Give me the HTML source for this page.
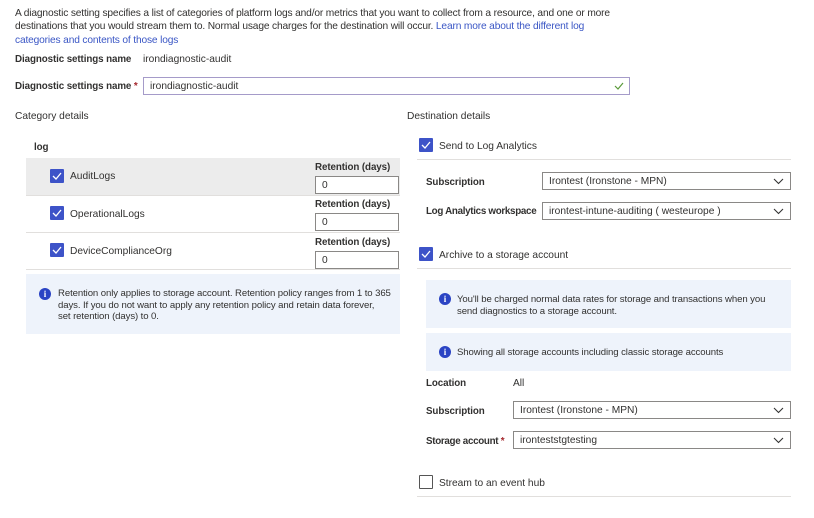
<!DOCTYPE html>
<html><head><meta charset="utf-8"><style>
*{margin:0;padding:0;box-sizing:border-box}
body{width:814px;height:518px;background:#fff;font-family:"Liberation Sans",sans-serif;font-size:10.2px;color:#323130;position:relative;overflow:hidden}
.a{position:absolute;white-space:nowrap;margin-top:1px}
.b{font-weight:bold;font-size:9.8px;letter-spacing:-0.1px}
.cb{position:absolute;width:14px;height:14px;background:#3d53c8;border-radius:1px}
.cb svg{position:absolute;left:2px;top:3px}
.cbu{position:absolute;width:14px;height:14px;border:1px solid #555;border-radius:1px;background:#fff}
.inp{position:absolute;border:1px solid #8a8886;background:#fff;height:18px;padding-left:6px;line-height:18px;font-size:10.2px}
.dd svg{position:absolute;right:6px;top:5px}
.ln{position:absolute;height:1px;background:#e1dfdd}
.info{position:absolute;background:#eef3fb}
.ic{position:absolute;width:12px;height:12px;border-radius:50%;background:#2b44c4;color:#fff;font-size:9px;font-weight:bold;text-align:center;line-height:12px;font-family:"Liberation Serif",serif}
.sm{font-size:9.6px;letter-spacing:-0.1px}
</style></head><body>
<div class="a" style="left:15px;top:6px;line-height:13.3px;font-size:10.2px;letter-spacing:-0.15px">A diagnostic setting specifies a list of categories of platform logs and/or metrics that you want to collect from a resource, and one or more<br>destinations that you would stream them to. Normal usage charges for the destination will occur. <span style="color:#3a56c5">Learn more about the different log</span><br><span style="color:#3a56c5">categories and contents of those logs</span></div>

<div class="a b" style="left:15px;top:53px">Diagnostic settings name</div>
<div class="a" style="left:143px;top:53px">irondiagnostic-audit</div>
<div class="a b" style="left:15px;top:80px">Diagnostic settings name <span style="color:#a4262c">*</span></div>
<div class="inp" style="left:143px;top:77px;width:487px;border-color:#a59bc9">irondiagnostic-audit</div>
<svg class="a" style="left:614px;top:81px" width="10" height="8"><path d="M1 4 L4 7 L9 1" stroke="#5a9a3a" stroke-width="1.2" fill="none"/></svg>

<div class="a" style="left:15px;top:110px">Category details</div>
<div class="a" style="left:407px;top:110px">Destination details</div>

<div class="a b" style="left:34px;top:141px">log</div>
<div class="a" style="left:26px;top:158px;width:374px;height:37px;background:#ececec;margin-top:0"></div>
<div class="ln" style="left:26px;top:195px;width:374px"></div>
<div class="ln" style="left:26px;top:232px;width:374px"></div>
<div class="ln" style="left:26px;top:269px;width:374px"></div>

<div class="cb" style="left:50px;top:169px"><svg width="10" height="8"><path d="M1 4 L4 7 L9 1" stroke="#fff" stroke-width="1.3" fill="none"/></svg></div>
<div class="a" style="left:70px;top:170px">AuditLogs</div>
<div class="a b" style="left:315px;top:161px">Retention (days)</div>
<div class="inp" style="left:315px;top:176px;width:84px">0</div>

<div class="cb" style="left:50px;top:206px"><svg width="10" height="8"><path d="M1 4 L4 7 L9 1" stroke="#fff" stroke-width="1.3" fill="none"/></svg></div>
<div class="a" style="left:70px;top:208px">OperationalLogs</div>
<div class="a b" style="left:315px;top:198px">Retention (days)</div>
<div class="inp" style="left:315px;top:213px;width:84px">0</div>

<div class="cb" style="left:50px;top:243px"><svg width="10" height="8"><path d="M1 4 L4 7 L9 1" stroke="#fff" stroke-width="1.3" fill="none"/></svg></div>
<div class="a" style="left:70px;top:245px">DeviceComplianceOrg</div>
<div class="a b" style="left:315px;top:236px">Retention (days)</div>
<div class="inp" style="left:315px;top:251px;width:84px">0</div>

<div class="info" style="left:26px;top:274px;width:374px;height:60px"></div>
<div class="ic" style="left:39px;top:288px">i</div>
<div class="a sm" style="left:58px;top:287px;line-height:11.5px">Retention only applies to storage account. Retention policy ranges from 1 to 365<br>days. If you do not want to apply any retention policy and retain data forever,<br>set retention (days) to 0.</div>

<div class="cb" style="left:419px;top:138px"><svg width="10" height="8"><path d="M1 4 L4 7 L9 1" stroke="#fff" stroke-width="1.3" fill="none"/></svg></div>
<div class="a" style="left:439px;top:140px">Send to Log Analytics</div>
<div class="ln" style="left:417px;top:159px;width:374px"></div>

<div class="a b" style="left:426px;top:176px">Subscription</div>
<div class="inp dd" style="left:542px;top:172px;width:249px">Irontest (Ironstone - MPN)<svg width="11" height="7"><path d="M1 1 L5.5 5.5 L10 1" stroke="#333" stroke-width="1.1" fill="none"/></svg></div>
<div class="a b" style="left:426px;top:205px;letter-spacing:-0.3px">Log Analytics workspace</div>
<div class="inp dd" style="left:542px;top:202px;width:249px">irontest-intune-auditing ( westeurope )<svg width="11" height="7"><path d="M1 1 L5.5 5.5 L10 1" stroke="#333" stroke-width="1.1" fill="none"/></svg></div>

<div class="cb" style="left:419px;top:247px"><svg width="10" height="8"><path d="M1 4 L4 7 L9 1" stroke="#fff" stroke-width="1.3" fill="none"/></svg></div>
<div class="a" style="left:439px;top:249px">Archive to a storage account</div>
<div class="ln" style="left:417px;top:268px;width:374px"></div>

<div class="info" style="left:426px;top:280px;width:365px;height:48px"></div>
<div class="ic" style="left:439px;top:293px">i</div>
<div class="a sm" style="left:457px;top:293px;line-height:12px">You'll be charged normal data rates for storage and transactions when you<br>send diagnostics to a storage account.</div>
<div class="info" style="left:426px;top:333px;width:365px;height:38px"></div>
<div class="ic" style="left:439px;top:346px">i</div>
<div class="a sm" style="left:457px;top:346px">Showing all storage accounts including classic storage accounts</div>

<div class="a b" style="left:426px;top:377px">Location</div>
<div class="a" style="left:513px;top:377px">All</div>
<div class="a b" style="left:426px;top:405px">Subscription</div>
<div class="inp dd" style="left:513px;top:401px;width:278px">Irontest (Ironstone - MPN)<svg width="11" height="7"><path d="M1 1 L5.5 5.5 L10 1" stroke="#333" stroke-width="1.1" fill="none"/></svg></div>
<div class="a b" style="left:426px;top:435px;letter-spacing:-0.3px">Storage account <span style="color:#a4262c">*</span></div>
<div class="inp dd" style="left:513px;top:431px;width:278px">ironteststgtesting<svg width="11" height="7"><path d="M1 1 L5.5 5.5 L10 1" stroke="#333" stroke-width="1.1" fill="none"/></svg></div>

<div class="cbu" style="left:419px;top:475px"></div>
<div class="a" style="left:439px;top:477px">Stream to an event hub</div>
<div class="ln" style="left:417px;top:496px;width:374px"></div>
</body></html>
